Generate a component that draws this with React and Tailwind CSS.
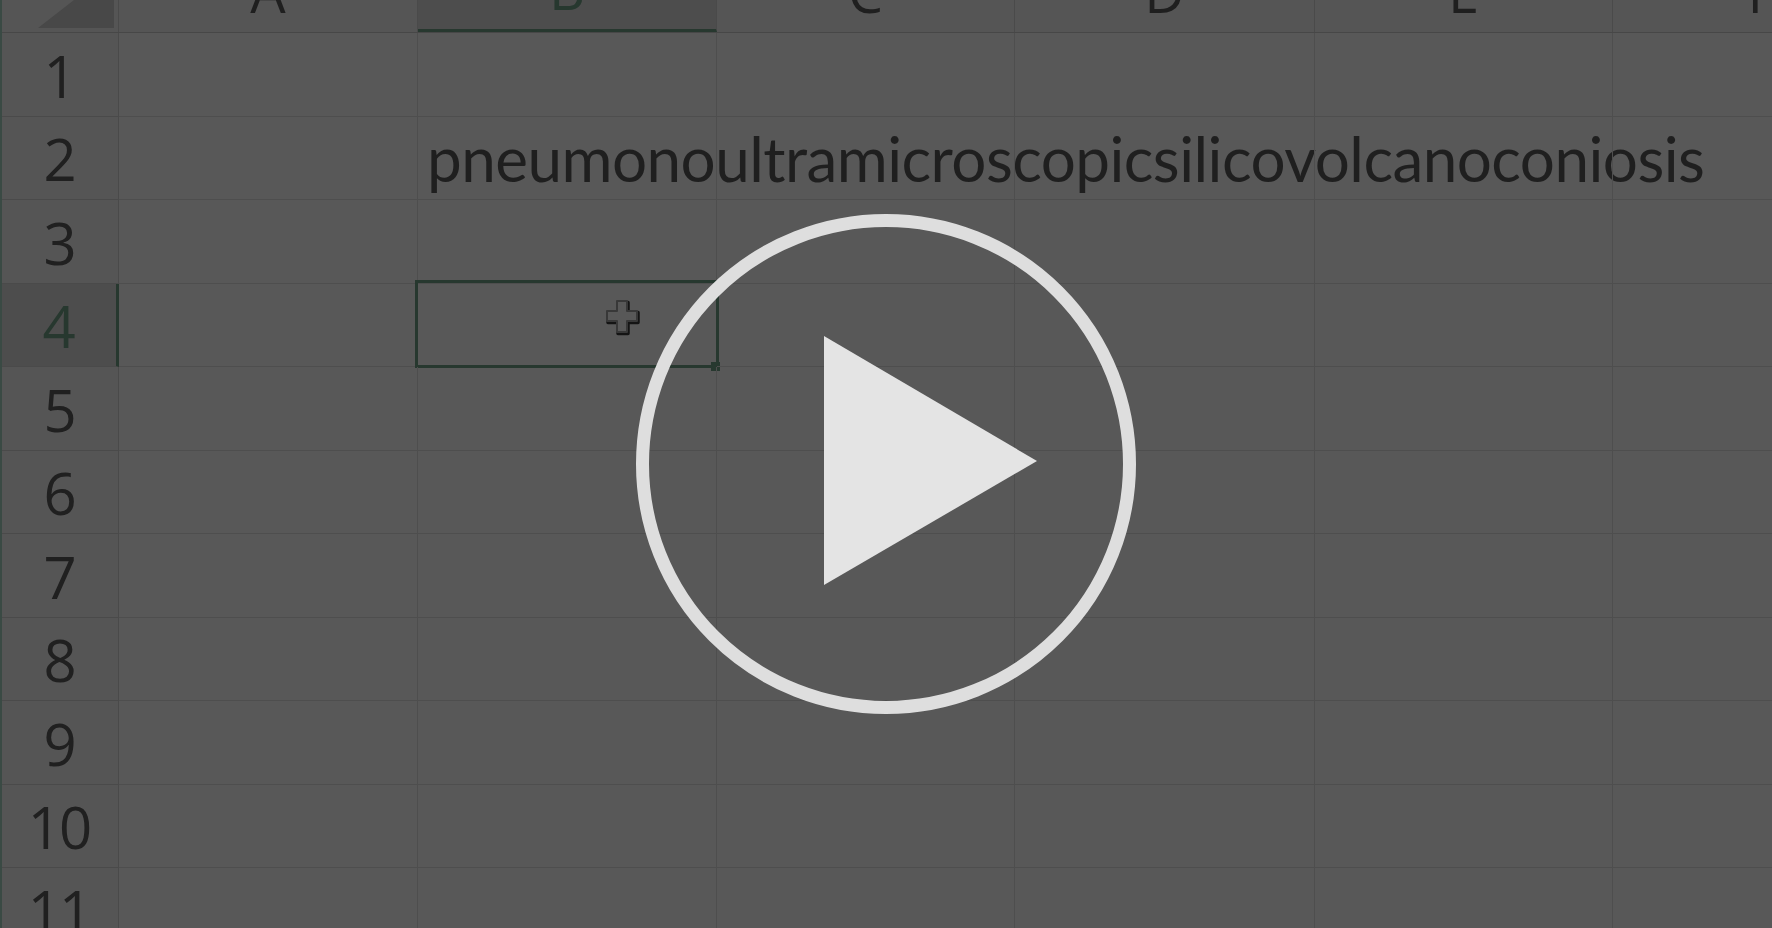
const columns = [
  { label: "A", className: "w-[299px]" },
  { label: "B", className: "w-[299px]", selected: true },
  { label: "C", className: "w-[298px]" },
  { label: "D", className: "w-[300px]" },
  { label: "E", className: "w-[298px]" },
  { label: "F", className: "w-[299px]" },
];
const rows = [1, 2, 3, 4, 5, 6, 7, 8, 9, 10, 11];
const digits = { fontFamily: '"Open Sans", sans-serif' };

function Cursor() {
  return (
    <svg width="38" height="40" viewBox="0 0 38 40" className="absolute left-[186px] top-[15px]">
      <path d="M13 3h10v10h10v10H23v11H13V23H3V13h10z" fill="none" stroke="#141414" strokeWidth="3.5" strokeLinejoin="round" transform="translate(1 1.5)" />
      <path d="M13 3h10v10h10v10H23v11H13V23H3V13h10z" fill="#585858" stroke="#383838" strokeWidth="2" strokeLinejoin="round" />
    </svg>
  );
}

function Cell({ col, row }) {
  const isActive = col.label === "B" && row === 4;
  return (
    <div className={`${col.className} relative shrink-0 border-r border-b border-[#4e4e4e]`}>
      {col.label === "B" && row === 2 && (
        <span className="absolute left-[9px] top-[3px] whitespace-nowrap font-['Lato',sans-serif] text-[62px] leading-[76px] tracking-[-0.55px] text-[#1f1f1f]">
          pneumonoultramicroscopicsilicovolcanoconiosis
        </span>
      )}
      {isActive && (
        <div className="absolute left-[-3px] top-[-3.5px] h-[88px] w-[304px] border-[3px] border-[#27382f]">
          <Cursor />
          <div className="absolute right-[-4px] bottom-[-6px] h-[9px] w-[9px] bg-[#27382f]" />
        </div>
      )}
    </div>
  );
}

export default function App() {
  return (
    <div className="relative h-[928px] w-full overflow-hidden bg-[#585858]">
      <div className="flex h-[33px] border-b border-[#474747] bg-[#555555]">
        <div className="relative h-full w-[119px] shrink-0 border-r border-[#4a4a4a]">
          <svg width="78" height="29" viewBox="0 0 78 29" className="absolute right-[2px] top-0">
            <polygon points="76,0 76,28 0,28 36,0" fill="#484848" />
          </svg>
        </div>
        {columns.map((c) => (
          <div
            key={c.label}
            className={`${c.className} flex shrink-0 items-end justify-center overflow-hidden border-r border-[#4a4a4a] ${
              c.selected ? "border-b-[3px] border-b-[#27382f] bg-[#4d4d4d]" : ""
            }`}
          >
            <span
              style={digits}
              className={`mb-[24px] text-[56px] leading-[34px] font-normal ${c.selected ? "text-[#27382f]" : "text-[#1f1f1f]"}`}
            >
              {c.label}
            </span>
          </div>
        ))}
      </div>
      {rows.map((r) => (
        <div key={r} className="flex h-[83.5px]">
          <div
            style={digits}
            className={`flex w-[119px] shrink-0 items-center justify-center border-r border-b border-[#4a4a4a] pt-[3px] text-[58px] leading-none font-normal tracking-[-2px] ${
              r === 4 ? "border-r-[3px] border-r-[#27382f] bg-[#4d4d4d] text-[#27382f]" : "bg-[#555555] text-[#202020]"
            }`}
          >
            {r}
          </div>
          {columns.map((c) => (
            <Cell key={c.label} col={c} row={r} />
          ))}
        </div>
      ))}
      <div className="absolute inset-y-0 left-0 w-[2px] bg-[#3a4a44]" />
      <svg width="500" height="502" viewBox="0 0 500 502" className="absolute left-[636px] top-[213px]">
        <circle cx="250" cy="251" r="243.5" fill="none" stroke="#dedede" strokeWidth="13" />
        <polygon points="188,123 401,248 188,372" fill="#e4e4e4" />
      </svg>
    </div>
  );
}
